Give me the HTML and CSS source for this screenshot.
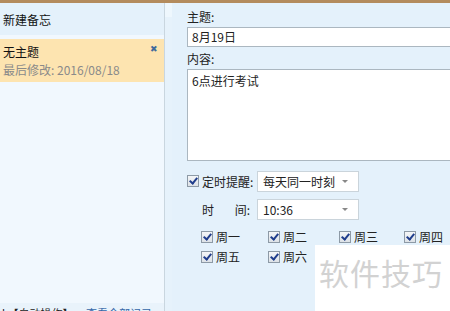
FILE: index.html
```html
<!DOCTYPE html>
<html lang="zh-CN">
  <head>
    <meta charset="UTF-8" />
    <title>备忘录</title>
    <link rel="stylesheet" href="styles.css">
  </head>
  <body>
    <div class="topbar"></div>
    <div class="app">
      <aside class="side">
        <div class="side-head">新建备忘</div>
        <div class="note">
          <div class="note-title">无主题</div>
          <div class="note-time">最后修改: 2016/08/18</div>
          <span class="note-del">&#x2716;</span>
        </div>
        <div class="side-fill"></div>
        <div class="side-foot">
          <span>l 【自动操作】</span>
          <span class="foot-link">查看全部记录</span>
        </div>
      </aside>
      <div class="rail"><div class="thumb"></div></div>
      <main class="form">
        <div class="label">主题:</div>
        <div class="field">8月19日</div>
        <div class="label">内容:</div>
        <div class="field area">6点进行考试</div>
        <div class="row">
          <span class="check"></span>
          <span class="row-label">定时提醒:</span>
          <div class="select">每天同一时刻<span class="arrow"></span></div>
        </div>
        <div class="row">
          <span class="row-label time-label"><span>时</span><span>间:</span></span>
          <div class="select">10:36<span class="arrow"></span></div>
        </div>
        <div class="days">
          <div class="day"><span class="check"></span>周一</div>
          <div class="day"><span class="check"></span>周二</div>
          <div class="day"><span class="check"></span>周三</div>
          <div class="day"><span class="check"></span>周四</div>
          <div class="day"><span class="check"></span>周五</div>
          <div class="day"><span class="check"></span>周六</div>
        </div>
      </main>
    </div>
    <div class="mark">软件技巧</div>
  </body>
</html>
```

FILE: styles.css
```css
html,
body {
  margin: 0;
  width: 450px;
  height: 311px;
  overflow: hidden;
}
body {
  font-family: "Noto Sans CJK SC", "Liberation Sans", sans-serif;
  font-size: 12px;
  color: #222;
  background: #e4f1fb;
  position: relative;
}
.topbar {
  height: 3px;
  background: #b38b5d;
}
.app {
  display: flex;
  height: 308px;
}
.side {
  width: 164px;
  flex: none;
  display: flex;
  flex-direction: column;
  background: #f1f8fe;
  border-right: 1px solid #c9d6df;
}
.side-head {
  height: 32px;
  line-height: 33px;
  padding-left: 3px;
  background: #e4f1fb;
  color: #111;
}
.note {
  position: relative;
  margin-top: 4px;
  height: 43px;
  padding: 4px 3px 0;
  box-sizing: border-box;
  background: #fde4b0;
}
.note-title {
  color: #111;
  line-height: 18px;
}
.note-time {
  color: #8a8a8a;
  line-height: 18px;
}
.note-del {
  position: absolute;
  right: 6px;
  top: 3px;
  font-size: 9px;
  color: #3f6a9c;
}
.side-fill {
  flex: 1;
}
.side-foot {
  height: 8px;
  padding: 4px 0 0 2px;
  box-sizing: border-box;
  background: #e9f3fb;
  font-size: 11px;
  line-height: 12px;
  white-space: nowrap;
  overflow: hidden;
}
.foot-link {
  margin-left: 10px;
  color: #3567a8;
}
.rail {
  width: 7px;
  flex: none;
  background: #e6f2fb;
}
.thumb {
  height: 14px;
  background: #eef7fd;
}
.form {
  flex: 1;
  padding: 6px 0 0 15px;
  overflow: hidden;
}
.label {
  line-height: 16px;
  height: 18px;
}
.field {
  height: 18px;
  line-height: 18px;
  padding-left: 4px;
  margin-bottom: 4px;
  background: #fff;
  border: 1px solid #abb7c0;
  border-right: none;
}
.area {
  height: 88px;
  padding-top: 2px;
  margin-bottom: 9px;
}
.row {
  display: flex;
  align-items: center;
  height: 22px;
  margin-bottom: 6px;
}
.row-label {
  width: 55px;
  margin-left: 3px;
}
.time-label {
  display: flex;
  justify-content: space-between;
  width: 48px;
  margin-left: 15px;
  margin-right: 7px;
}
.select {
  position: relative;
  width: 95px;
  height: 19px;
  line-height: 19px;
  padding-left: 5px;
  background: #fff;
  border: 1px solid #cad4db;
}
.arrow {
  position: absolute;
  right: 10px;
  top: 8px;
  border-left: 3px solid transparent;
  border-right: 3px solid transparent;
  border-top: 3px solid #888;
}
.check {
  display: inline-block;
  width: 10px;
  height: 10px;
  border: 1px solid #8d9aa6;
  background: linear-gradient(#f4f6f8, #dde2e7);
  position: relative;
  flex: none;
}
.check::after {
  content: "";
  position: absolute;
  left: 3px;
  top: 0;
  width: 3px;
  height: 6px;
  border: solid #203e8c;
  border-width: 0 2px 2px 0;
  transform: rotate(40deg);
}
.days {
  display: grid;
  grid-template-columns: 67px 71px 65px auto;
  row-gap: 2px;
  margin-left: 14px;
  margin-top: 8px;
}
.day {
  display: flex;
  align-items: center;
  gap: 3px;
  line-height: 18px;
}
.mark {
  position: absolute;
  left: 315px;
  top: 245px;
  width: 135px;
  height: 66px;
  background: #fff;
  color: #d2d2d2;
  font-size: 30px;
  line-height: 54px;
  padding-left: 4px;
  box-sizing: border-box;
  letter-spacing: 1px;
}
```
